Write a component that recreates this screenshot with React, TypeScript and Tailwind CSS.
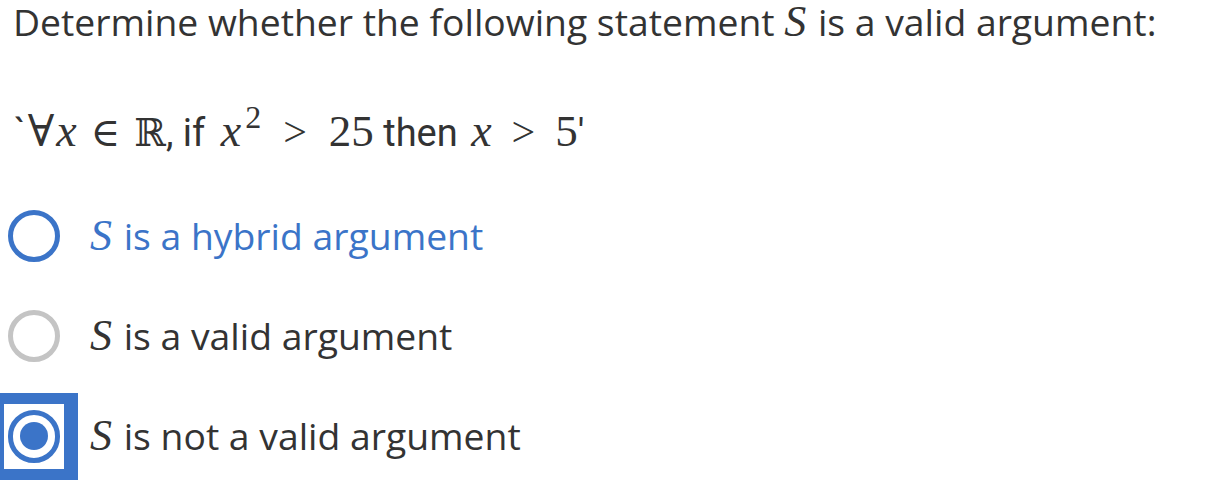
import React from "react";

const sans = "font-['Open_Sans',sans-serif]";
const math = "font-['Liberation_Serif','DejaVu_Serif',serif]";

function MathS() {
  return <span className={`${math} mr-[2px] italic text-[44px] leading-none`}>S</span>;
}

function Radio({ state }: { state: "hover" | "idle" | "checked" }) {
  if (state === "checked") {
    return (
      <div className="relative flex h-[65px] w-[60px] items-center justify-center">
        <span className="absolute -bottom-[11px] -left-[14px] -right-[14px] -top-[11px] border-x-[14px] border-y-[11px] border-[#3b74c8]" />
        <span className="flex h-[53px] w-[52px] items-center justify-center rounded-full border-[5px] border-[#3b74c8]">
          <span className="h-[28px] w-[28px] rounded-full bg-[#3b74c8]" />
        </span>
      </div>
    );
  }
  return (
    <div className="flex h-[65px] w-[60px] items-center justify-center">
      <span
        className={`h-[52px] w-[52px] rounded-full border-[5px] ${
          state === "hover" ? "border-[#3b74c8]" : "border-[#c4c4c4]"
        }`}
      />
    </div>
  );
}

const options = [
  { text: "is a hybrid argument", state: "hover" as const },
  { text: "is a valid argument", state: "idle" as const },
  { text: "is not a valid argument", state: "checked" as const },
];

export default function App() {
  return (
    <div className={`h-[482px] w-[1210px] overflow-hidden bg-white ${sans} text-[#333]`}>
      <p className="pl-[13px] text-[37.3px] leading-[44px]">
        Determine whether the following statement <MathS /> is a valid argument:
      </p>

      {/* statement */}
      <p className="mt-[59px] flex h-[56px] items-baseline pl-[14px] font-['Roboto',sans-serif] text-[38px] leading-[56px] text-[#333]">
        <span>`</span>
        <span className={`${math} ml-[2px] text-[44px]`}>∀</span>
        <span className={`${math} ml-[2px] italic text-[46px]`}>x</span>
        <span className={`${math} mx-[14px] text-[40px]`}>∈</span>
        <span className="font-['DejaVu_Serif',serif] text-[38px]">ℝ</span>
        <span className="whitespace-pre">, if </span>
        <span className={`${math} ml-[6px] italic text-[46px]`}>x</span>
        <span className={`${math} relative -top-[18px] ml-[4px] text-[32px]`}>2</span>
        <span className={`${math} mx-[22px] text-[42px]`}>&gt;</span>
        <span className={`${math} text-[45px]`}>25</span>
        <span className="whitespace-pre"> then </span>
        <span className={`${math} ml-[4px] italic text-[46px]`}>x</span>
        <span className={`${math} mx-[20px] text-[42px]`}>&gt;</span>
        <span className={`${math} text-[45px]`}>5</span>
        <span>'</span>
      </p>

      <div className="mt-[27px] flex flex-col">
        {options.map((o) => (
          <div key={o.text} className="flex h-[100px] items-center">
            <div className="ml-[4px]">
              <Radio state={o.state} />
            </div>
            <p
              className={`ml-[26px] text-[37.3px] leading-[48px] ${
                o.state === "hover" ? "text-[#3b74c8]" : "text-[#333]"
              }`}
            >
              <MathS /> {o.text}
            </p>
          </div>
        ))}
      </div>
    </div>
  );
}
